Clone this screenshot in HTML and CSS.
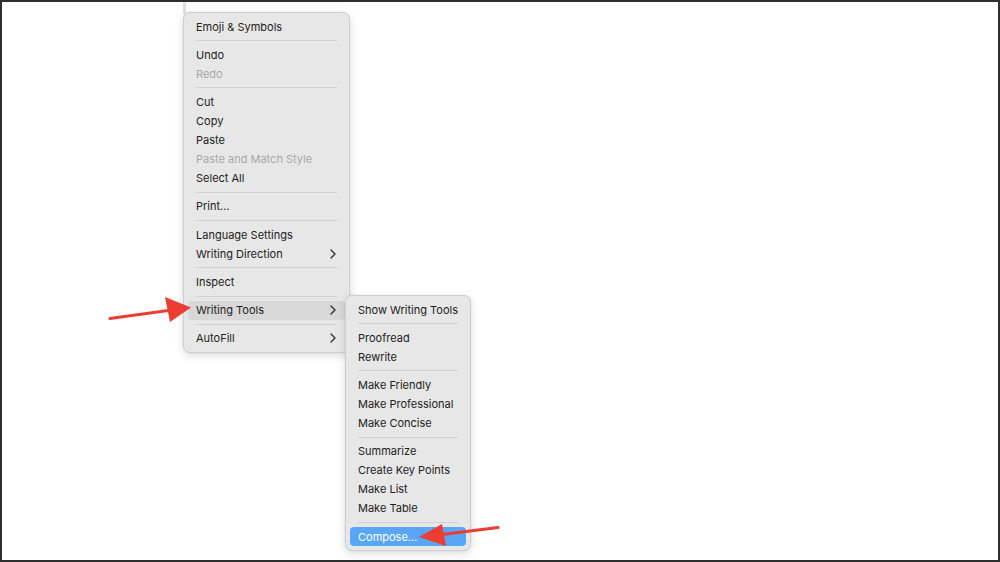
FILE: index.html
```html
<!DOCTYPE html>
<html>
<head>
<meta charset="utf-8">
<link rel="stylesheet" href="styles.css">
</head>
<body>
<div class="frame">
  <div class="caret"></div>
  <div class="menu main-menu">
    <div class="item">Emoji &amp; Symbols</div>
    <div class="sep"></div>
    <div class="item">Undo</div>
    <div class="item disabled">Redo</div>
    <div class="sep"></div>
    <div class="item">Cut</div>
    <div class="item">Copy</div>
    <div class="item">Paste</div>
    <div class="item disabled">Paste and Match Style</div>
    <div class="item">Select All</div>
    <div class="sep"></div>
    <div class="item">Print…</div>
    <div class="sep"></div>
    <div class="item">Language Settings</div>
    <div class="item">Writing Direction<svg class="chev" viewBox="0 0 6 10"><polyline points="1,1 5,5 1,9"/></svg></div>
    <div class="sep"></div>
    <div class="item">Inspect</div>
    <div class="sep"></div>
    <div class="item hover">Writing Tools<svg class="chev" viewBox="0 0 6 10"><polyline points="1,1 5,5 1,9"/></svg></div>
    <div class="sep"></div>
    <div class="item">AutoFill<svg class="chev" viewBox="0 0 6 10"><polyline points="1,1 5,5 1,9"/></svg></div>
  </div>
  <div class="menu sub-menu">
    <div class="item">Show Writing Tools</div>
    <div class="sep"></div>
    <div class="item">Proofread</div>
    <div class="item">Rewrite</div>
    <div class="sep"></div>
    <div class="item">Make Friendly</div>
    <div class="item">Make Professional</div>
    <div class="item">Make Concise</div>
    <div class="sep"></div>
    <div class="item">Summarize</div>
    <div class="item">Create Key Points</div>
    <div class="item">Make List</div>
    <div class="item">Make Table</div>
    <div class="sep"></div>
    <div class="item selected">Compose…</div>
  </div>
  <svg class="arrows" viewBox="0 0 1000 562" width="1000" height="562">
    <line x1="110" y1="318.5" x2="172" y2="310" class="shaft"/>
    <polygon points="191,307.5 165,297 170,322" class="head"/>
    <line x1="498" y1="527.5" x2="438" y2="535" class="shaft"/>
    <polygon points="419,537 442,524 446,546" class="head"/>
  </svg>
</div>
</body>
</html>
```
FILE: styles.css
```css
html, body {
  margin: 0;
  padding: 0;
  background: #ffffff;
}
.frame {
  position: relative;
  width: 1000px;
  height: 562px;
  box-sizing: border-box;
  border: 2px solid #2e2e2e;
  background: #ffffff;
  overflow: hidden;
  font-family: Inter, "Liberation Sans", sans-serif;
}
.caret {
  position: absolute;
  left: 181px;
  top: 0;
  width: 3px;
  height: 12px;
  background: #dcdfe3;
}
.menu {
  position: absolute;
  display: flex;
  flex-direction: column;
  box-sizing: border-box;
  padding: 4px;
  background: #e7e7e7;
  border: 1px solid #cfcfcf;
  border-radius: 7px;
  box-shadow: 0 3px 10px rgba(0, 0, 0, 0.13), 0 0 2px rgba(0, 0, 0, 0.08);
}
.main-menu {
  left: 181px;
  top: 10px;
  width: 167px;
}
.sub-menu {
  left: 343px;
  top: 293px;
  width: 126px;
}
.item {
  display: flex;
  align-items: center;
  justify-content: space-between;
  height: 19px;
  padding: 0 8px;
  font-size: 11px;
  color: #222222;
  white-space: nowrap;
  border-radius: 4px;
}
.item.disabled {
  color: #a9a9a9;
}
.item.hover {
  background: #d8d8d8;
}
.item.selected {
  background: #5aa6f6;
  color: #ffffff;
}
.sep {
  height: 1px;
  margin: 4.2px 8px 4.1px;
  background: #d2d2d2;
}
.chev {
  width: 6px;
  height: 10px;
  margin-right: 1px;
  fill: none;
  stroke: #333333;
  stroke-width: 1.4;
  stroke-linecap: round;
  stroke-linejoin: round;
}
.arrows {
  position: absolute;
  left: -2px;
  top: -2px;
}
.shaft {
  stroke: #ec3d33;
  stroke-width: 3.2;
  stroke-linecap: round;
}
.head {
  fill: #ec3d33;
}
```
